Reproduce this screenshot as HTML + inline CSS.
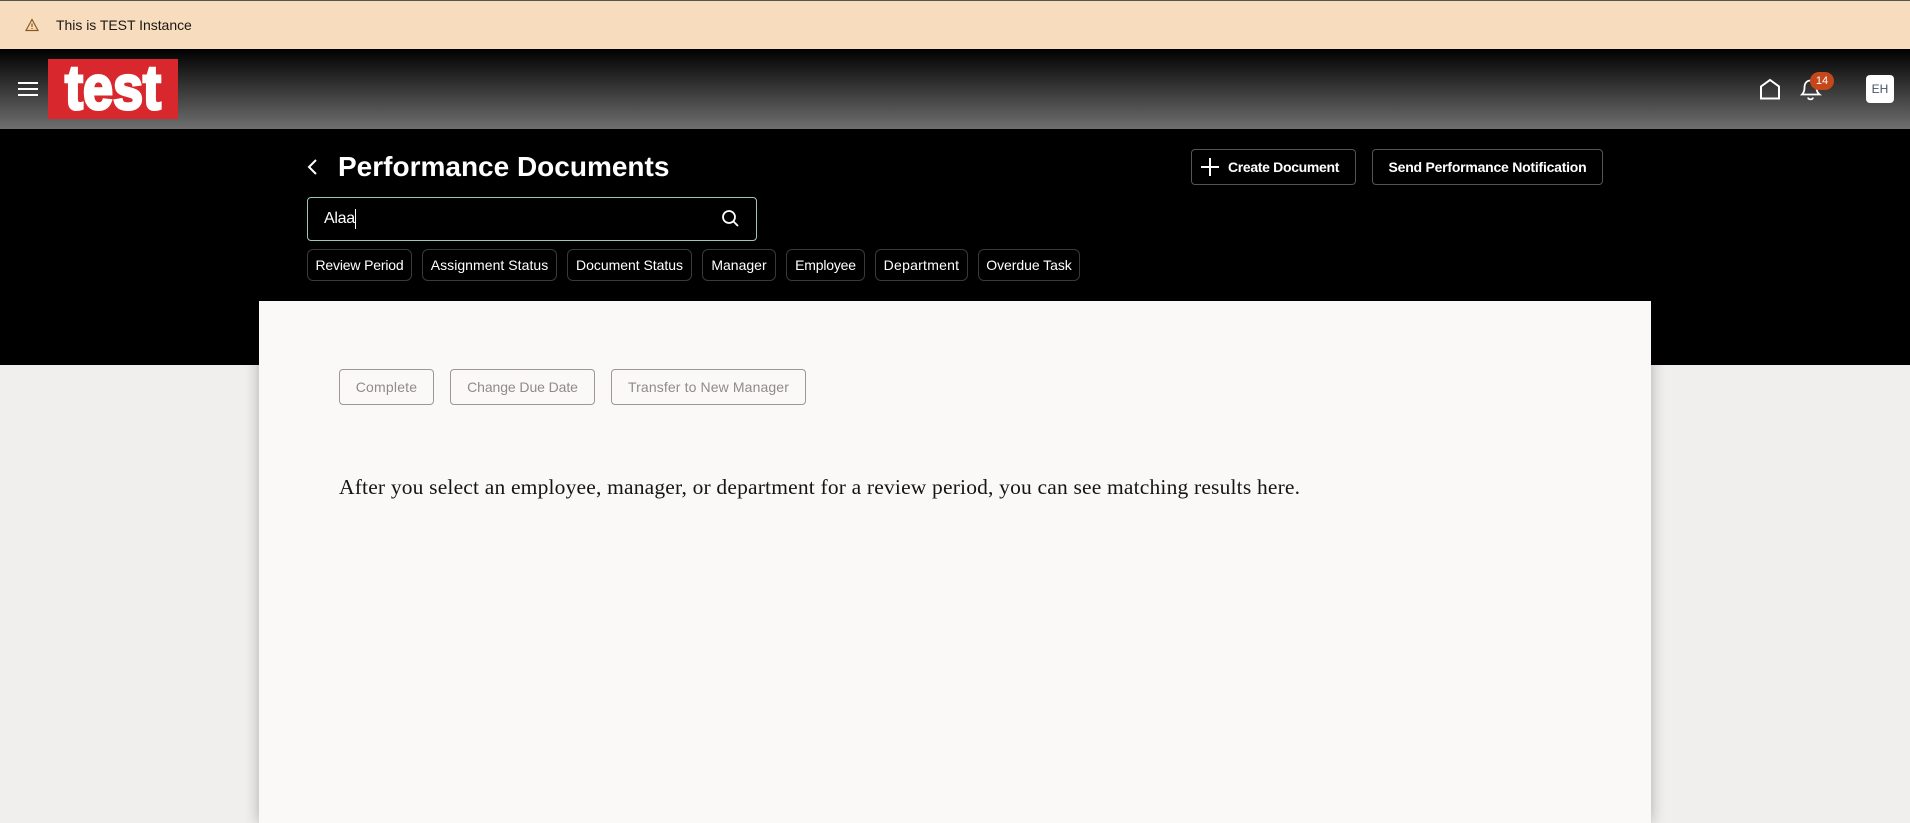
<!DOCTYPE html>
<html lang="en"><head><meta charset="utf-8"><title>Performance Documents</title>
<style>
html,body{margin:0;padding:0;width:1910px;height:823px;overflow:hidden;background:#f1efed;font-family:"Liberation Sans",sans-serif}
div,span{box-sizing:border-box;position:absolute}
.t{white-space:nowrap;line-height:20px}
.c,.b,.d{display:flex;align-items:center;justify-content:center;white-space:nowrap;border-radius:4px}
.c{top:249px;height:32px;border:1px solid #3a3a3a;border-radius:6px;color:#fff;font-size:14px}
.b{top:149px;height:36px;border:1px solid #555;color:#fff;font-size:14px;font-weight:bold}
.d{top:369px;height:36px;border:1px solid #9c9894;color:#8f8b87;font-size:14px;background:#fbf9f8}
</style></head><body>
<div style="left:0;top:0;width:1910px;height:49px;background:#f8dcbe;border-top:1px solid #555"></div>
<svg style="position:absolute;left:25px;top:18px" width="14" height="14" viewBox="0 0 14 14" fill="none" stroke="#8a5a1f" stroke-width="1.2"><path d="M7 1.5 13 12.5H1Z"/><path d="M7 5.5V9M7 10V11"/></svg>
<div class="t" style="left:56px;top:15px;font-size:14px;color:#1a1816;letter-spacing:-.03px">This is TEST Instance</div>

<div style="left:0;top:49px;width:1910px;height:80px;background:linear-gradient(#000,#6f6f6f)"></div>
<div style="left:18px;top:82px;width:20px;height:2px;background:#fff"></div>
<div style="left:18px;top:88px;width:20px;height:2px;background:#fff"></div>
<div style="left:18px;top:94px;width:20px;height:2px;background:#fff"></div>
<svg style="position:absolute;left:48px;top:59px" width="130" height="60" viewBox="0 0 130 60"><rect width="130" height="60" fill="#d9272e"/><text x="17" y="50" font-family="Liberation Sans" font-weight="bold" font-size="62" fill="#fff" stroke="#fff" stroke-width="3" textLength="96" lengthAdjust="spacingAndGlyphs">test</text></svg>
<svg style="position:absolute;left:1759px;top:78px" width="22" height="22" viewBox="0 0 22 22" fill="none" stroke="#fff" stroke-width="2"><path d="M2 20.500V8.500L11 2l9 6.500v12Z"/></svg>
<svg style="position:absolute;left:1800px;top:78px" width="22" height="24" viewBox="0 0 22 24" fill="none" stroke="#fff" stroke-width="1.8"><path d="M2 16.500c2-2 2.500-4 2.500-7C4.500 5 7 2.500 10.500 2.500S16.500 5 16.500 9.500c0 3 .5 5 3 7Z"/><path d="M8 19.500c.5 2.500 4.500 2.500 5 0"/></svg>
<div style="left:1810px;top:72px;width:24px;height:18px;border-radius:9px;background:#c4481a;color:#fff;font-size:11px;line-height:18px;text-align:center">14</div>
<div style="left:1866px;top:75px;width:28px;height:28px;border-radius:4px;background:#fff;color:#4a5568;font-size:12px;line-height:28px;text-align:center">EH</div>

<div style="left:0;top:129px;width:1910px;height:236px;background:#000"></div>
<svg style="position:absolute;left:306px;top:158px" width="14" height="18" viewBox="0 0 14 18" fill="none" stroke="#fff" stroke-width="2"><path d="M10 2 3 9l7 7"/></svg>
<div class="t" style="left:338px;top:152px;font-size:28px;line-height:30px;font-weight:bold;color:#fff">Performance Documents</div>
<div class="b" style="left:1191px;width:165px;padding-left:20px;letter-spacing:-.32px">Create Document</div>
<svg style="position:absolute;left:1201px;top:158px" width="18" height="18" viewBox="0 0 18 18" stroke="#fff" stroke-width="2"><path d="M9 0V18M0 9H18"/></svg>
<div class="b" style="left:1372px;width:231px;letter-spacing:-.23px">Send Performance Notification</div>
<div style="left:307px;top:197px;width:450px;height:44px;border:1px solid #9cc7b8;border-radius:4px;background:#000"></div>
<div class="t" style="left:324px;top:209px;font-size:16px;color:#fff;letter-spacing:-.3px">Alaa</div>
<div style="left:355px;top:209px;width:1px;height:20px;background:#fff"></div>
<svg style="position:absolute;left:720px;top:208px" width="20" height="20" viewBox="0 0 20 20" fill="none" stroke="#fff" stroke-width="1.8"><circle cx="9" cy="9" r="6"/><path d="M13.500 13.500 18 18"/></svg>
<div class="c" style="left:307px;width:105px;letter-spacing:-.17px">Review Period</div>
<div class="c" style="left:422px;width:135px;letter-spacing:.05px">Assignment Status</div>
<div class="c" style="left:567px;width:125px;letter-spacing:-.03px">Document Status</div>
<div class="c" style="left:702px;width:74px">Manager</div>
<div class="c" style="left:786px;width:79px;letter-spacing:-.2px">Employee</div>
<div class="c" style="left:875px;width:93px;letter-spacing:.25px">Department</div>
<div class="c" style="left:978px;width:102px;letter-spacing:-.05px">Overdue Task</div>

<div style="left:259px;top:301px;width:1392px;height:522px;background:#fbf9f8;box-shadow:0 0 14px rgba(0,0,0,.28);clip-path:inset(64px -30px 0 -30px)"></div>
<div style="left:259px;top:301px;width:1392px;height:522px;background:#fbf9f8"></div>
<div class="d" style="left:339px;width:95px;letter-spacing:.2px">Complete</div>
<div class="d" style="left:450px;width:145px;letter-spacing:-.09px">Change Due Date</div>
<div class="d" style="left:611px;width:195px;letter-spacing:.12px">Transfer to New Manager</div>
<div class="t" style="left:339px;top:475px;font-family:'Liberation Serif',serif;font-size:21.500px;line-height:24px;color:#161513;letter-spacing:.18px">After you select an employee, manager, or department for a review period, you can see matching results here.</div>
</body></html>
